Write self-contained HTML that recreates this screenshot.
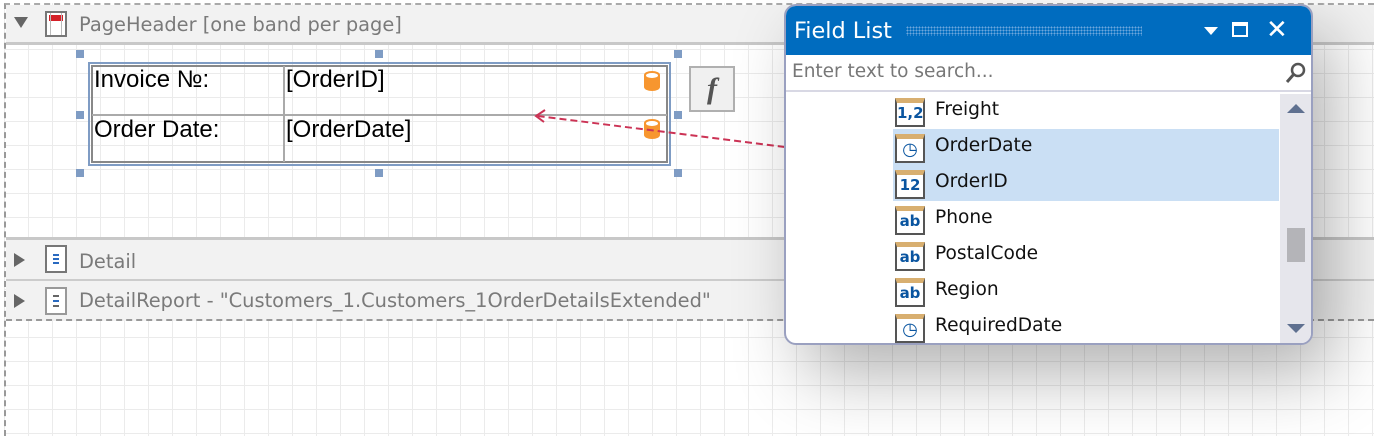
<!DOCTYPE html>
<html><head><meta charset="utf-8"><style>
*{margin:0;padding:0;box-sizing:border-box}
body{width:1374px;height:436px;overflow:hidden;background:#fff;font-family:"Liberation Sans",sans-serif;position:relative}
.grid{position:absolute;left:4px;top:3px;width:1370px;height:433px;
background-color:#fff;
background-image:linear-gradient(to right,#ebebeb 1px,transparent 1px),linear-gradient(to bottom,#ebebeb 1px,transparent 1px);
background-size:24px 24px;background-position:-2px -4px;border-left:2px dashed #999;border-top:2px dashed #aaa}
.band{position:absolute;left:6px;width:1368px;background:#f2f2f2;color:#7a7a7a;font-family:"DejaVu Sans","Liberation Sans",sans-serif;font-size:19.4px}
.band span{position:absolute;left:73px}
.tri{position:absolute;width:0;height:0}
.h{position:absolute;width:8px;height:8px;background:#7f9cc4}
.cell{position:absolute;font-size:24px;color:#000}
.cyl{position:absolute;width:16px;height:20px;background:#f7962f;border-radius:8px/4px}
.cyl:before{content:"";position:absolute;left:2px;top:2px;width:12px;height:5px;border-radius:50%;background:#fff}
.pop{position:absolute;left:784px;top:4px;width:529px;height:341px;border:2px solid #9aa0c0;border-radius:12px;background:#fff;overflow:hidden;box-shadow:20px 30px 70px rgba(0,0,0,.3)}
.hdr{height:49px;background:#006cbf;color:#fff;font-family:"DejaVu Sans",sans-serif;font-size:22.4px;position:relative}
.item{position:absolute;left:107px;height:36px;width:386px;font-family:"DejaVu Sans",sans-serif;font-size:18.6px;color:#111}
.item .ic{position:absolute;left:2px;top:5px;width:30px;height:29px;border:2px solid #555;border-top:5px solid #d8af70;background:#fff;color:#0a55a0;font-weight:bold;font-size:15px;text-align:center;line-height:21px}
.item .t{position:absolute;left:42px;top:6px}
.sel{background:#cadff4}
</style></head><body>
<div class="grid"></div>
<div class="band" style="top:5px;height:40px;border-bottom:3px solid #c8c8c8"><span style="top:8px">PageHeader [one band per page]</span></div>
<div class="tri" style="left:14px;top:17px;border-left:7px solid transparent;border-right:7px solid transparent;border-top:11px solid #666"></div>
<div style="position:absolute;left:45px;top:11px;width:22px;height:26px;border:2px solid #777;background:#fff"><div style="height:6px;background:#d42027;margin:2px"></div><div style="position:absolute;left:3px;top:0;bottom:0;border-left:1px solid #bbb"></div><div style="position:absolute;right:3px;top:0;bottom:0;border-left:1px solid #bbb"></div></div>
<div class="h" style="left:76px;top:50px"></div><div class="h" style="left:375px;top:50px"></div><div class="h" style="left:674px;top:50px"></div>
<div class="h" style="left:76px;top:111px"></div><div class="h" style="left:674px;top:111px"></div>
<div class="h" style="left:76px;top:169px"></div><div class="h" style="left:375px;top:169px"></div><div class="h" style="left:674px;top:169px"></div>
<div style="position:absolute;left:88px;top:62px;width:583px;height:104px;border:2px solid #7f9cc4"></div>
<div style="position:absolute;left:91px;top:65px;width:577px;height:98px;border:2px solid #888"></div>
<div style="position:absolute;left:283px;top:66px;width:2px;height:96px;background:#aaa"></div>
<div style="position:absolute;left:92px;top:114px;width:575px;height:2px;background:#aaa"></div>
<div class="cell" style="left:94px;top:66px">Invoice №:</div>
<div class="cell" style="left:286px;top:66px">[OrderID]</div>
<div class="cell" style="left:94px;top:116px">Order Date:</div>
<div class="cell" style="left:286px;top:116px">[OrderDate]</div>
<div class="cyl" style="left:644px;top:71px"></div>
<div class="cyl" style="left:644px;top:119px"></div>
<div style="position:absolute;left:689px;top:66px;width:46px;height:46px;border:2px solid #b0b0b0;background:#f0f0f0;font-family:'Liberation Serif',serif;font-style:italic;font-weight:bold;font-size:30px;color:#555;text-align:center;line-height:42px">f</div>
<div class="band" style="top:237px;height:44px;border-top:3px solid #c8c8c8;border-bottom:2px solid #ccc"><span style="top:10px">Detail</span></div>
<div class="band" style="top:281px;height:40px;border-bottom:2px dashed #999"><span style="top:8px">DetailReport - "Customers_1.Customers_1OrderDetailsExtended"</span></div>
<div class="tri" style="left:14px;top:253px;border-top:7px solid transparent;border-bottom:7px solid transparent;border-left:11px solid #666"></div>
<div class="tri" style="left:14px;top:294px;border-top:7px solid transparent;border-bottom:7px solid transparent;border-left:11px solid #666"></div>
<div style="position:absolute;left:45px;top:245px;width:22px;height:28px;border:2px solid #777;background:#fff"><div style="margin:7px 6px;height:10px;border-top:2px solid #2a6ac0;border-bottom:2px solid #2a6ac0"><div style="margin-top:2px;border-top:2px solid #2a6ac0"></div></div></div>
<div style="position:absolute;left:45px;top:287px;width:22px;height:28px;border:2px solid #999;background:#fff"><div style="margin:6px 6px;height:12px;border:2px solid #666;border-left:none;border-right:none"><div style="margin-top:3px;border-top:2px solid #2a6ac0"></div></div></div>
<svg style="position:absolute;left:0;top:0" width="1374" height="436"><line x1="872" y1="158" x2="538" y2="116" stroke="#cc3355" stroke-width="2" stroke-dasharray="7,4"/><polyline points="545,110 536,116 544,122" fill="none" stroke="#cc3355" stroke-width="2"/></svg>
<div class="pop">
<div class="hdr"><span style="position:absolute;left:8px;top:12px">Field List</span>
<div style="position:absolute;left:120px;top:20px;width:236px;height:10px;background-image:radial-gradient(circle,#6fa8dc 0.8px,transparent 1px);background-size:3px 3px"></div>
<div class="tri" style="left:418px;top:21px;border-left:7px solid transparent;border-right:7px solid transparent;border-top:8px solid #fff"></div>
<div style="position:absolute;left:446px;top:16px;width:16px;height:15px;border:2px solid #fff;border-top:4px solid #fff"></div>
<div style="position:absolute;left:480px;top:9px;font-size:26px;font-family:'DejaVu Sans',sans-serif">✕</div>
</div>
<div style="height:37px;border-bottom:2px solid #d8d8e4;position:relative;font-family:'DejaVu Sans',sans-serif;font-size:18.5px;color:#777"><span style="position:absolute;left:6px;top:6px">Enter text to search...</span>
<svg style="position:absolute;left:498px;top:6px" width="24" height="24"><circle cx="14" cy="9" r="6" fill="none" stroke="#555" stroke-width="2.5"/><line x1="10" y1="13" x2="3" y2="21" stroke="#555" stroke-width="3"/></svg></div>
<div style="position:absolute;left:494px;top:88px;width:33px;height:260px;background:#e6e6ec">
<div class="tri" style="left:7px;top:10px;border-left:9px solid transparent;border-right:9px solid transparent;border-bottom:9px solid #5f7090"></div>
<div style="position:absolute;left:7px;top:134px;width:18px;height:34px;background:#b4b4b8"></div>
<div class="tri" style="left:7px;top:230px;border-left:9px solid transparent;border-right:9px solid transparent;border-top:9px solid #5f7090"></div>
</div>
<div class="item" style="top:87px"><div class="ic">1,2</div><div class="t">Freight</div></div>
<div class="item sel" style="top:123px"><div class="ic" style="font-size:18px">◷</div><div class="t">OrderDate</div></div>
<div class="item sel" style="top:159px"><div class="ic">12</div><div class="t">OrderID</div></div>
<div class="item" style="top:195px"><div class="ic">ab</div><div class="t">Phone</div></div>
<div class="item" style="top:231px"><div class="ic">ab</div><div class="t">PostalCode</div></div>
<div class="item" style="top:267px"><div class="ic">ab</div><div class="t">Region</div></div>
<div class="item" style="top:303px"><div class="ic" style="font-size:18px">◷</div><div class="t">RequiredDate</div></div>
</div>
</body></html>
